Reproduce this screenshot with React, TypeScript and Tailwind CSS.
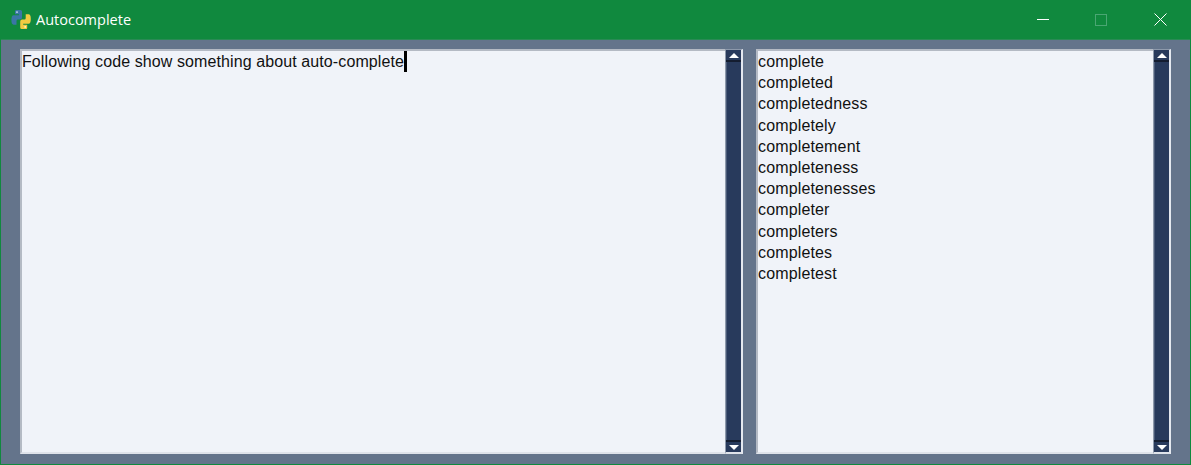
const words = [
  "complete",
  "completed",
  "completedness",
  "completely",
  "completement",
  "completeness",
  "completenesses",
  "completer",
  "completers",
  "completes",
  "completest",
];

function PythonLogo() {
  const half =
    "M4 1.6Q4 .4 6 .4H9.4Q11 .4 11 2V8Q11 10 9 10H6.6Q5.5 10 5.5 11.5V15.2H2.6Q.4 15.2 .4 10.6Q.4 5.8 2.6 5.8H8V4.8H4Z";
  return (
    <svg width="20" height="21" viewBox="0 0 20 20" className="shrink-0">
      <path fill="#3b76a6" d={half} />
      <circle cx="6" cy="2.6" r=".9" fill="#cfe0ee" />
      <g transform="rotate(180 10.1 10)">
        <path fill="#f2cb42" d={half} />
        <circle cx="6" cy="2.6" r=".9" fill="#fff6cf" />
      </g>
    </svg>
  );
}

function Scrollbar() {
  return (
    <div className="w-[18px] shrink-0 flex flex-col bg-[#283a5c] border-t border-t-[#8d99ab] border-b-2 border-b-[#dfe3ea] border-l border-l-[#8d99ab] border-r-2 border-r-[#e4e8ef]">
      <div className="h-[12px] shrink-0 flex items-center justify-center border-b-2 border-b-[#141d30]">
        <div className="w-0 h-0 border-x-[5px] border-x-transparent border-b-[5px] border-b-white" />
      </div>
      <div className="flex-1 border-l border-l-[#4a5a78]" />
      <div className="h-[12px] shrink-0 flex items-center justify-center border-t-2 border-t-[#141d30]">
        <div className="w-0 h-0 border-x-[5px] border-x-transparent border-t-[5px] border-t-white" />
      </div>
    </div>
  );
}

export default function App() {
  return (
    <div className="w-[1191px] h-[465px] flex flex-col overflow-hidden border border-[#10893e] border-t-0 font-['Liberation_Sans',sans-serif]">
      {/* Title bar */}
      <div className="h-[40px] shrink-0 flex items-center bg-[#10893e] border-b border-b-[#2a8a55] text-white">
        <div className="ml-[10px] flex items-center gap-[5px]">
          <PythonLogo />
          <span className="font-['Open_Sans',sans-serif] text-[14.5px]">Autocomplete</span>
        </div>
        <div className="ml-auto flex items-center">
          <div className="w-[58px] flex justify-center">
            <svg width="12" height="12" viewBox="0 0 12 12">
              <path d="M0 5.5H12" stroke="#fff" strokeWidth="1" />
            </svg>
          </div>
          <div className="w-[58px] flex justify-center">
            <svg width="12" height="12" viewBox="0 0 12 12">
              <rect x=".5" y=".5" width="11" height="11" fill="none" stroke="#4aa673" strokeWidth="1" />
            </svg>
          </div>
          <div className="w-[60px] flex justify-center">
            <svg width="13" height="13" viewBox="0 0 13 13">
              <path d="M.5 .5L12.5 12.5M12.5 .5L.5 12.5" stroke="#fff" strokeWidth="1" />
            </svg>
          </div>
        </div>
      </div>

      {/* Body */}
      <div className="flex-1 flex gap-[13px] bg-[#64748b] pt-[9px] pb-[10px] pl-[19px] pr-[19px]">
        <div className="w-[723px] flex">
          <div className="flex-1 bg-[#f0f3f9] border-t-2 border-l-2 border-b-2 border-t-[#b4bac4] border-l-[#b4bac4] border-b-[#dfe3ea] text-[16px] tracking-[0.1px] leading-[21.2px] text-[#111]">
            <span>Following code show something about auto-complete</span>
            <span className="inline-block w-[2.5px] h-[21px] bg-black align-[-5px]" />
          </div>
          <Scrollbar />
        </div>
        <div className="flex-1 flex">
          <div className="flex-1 bg-[#f0f3f9] border-t-2 border-l-2 border-b-2 border-t-[#b4bac4] border-l-[#b4bac4] border-b-[#dfe3ea] text-[16px] tracking-[0.15px] leading-[21.2px] text-[#111]">
            {words.map((w) => (
              <div key={w}>{w}</div>
            ))}
          </div>
          <Scrollbar />
        </div>
      </div>
    </div>
  );
}
